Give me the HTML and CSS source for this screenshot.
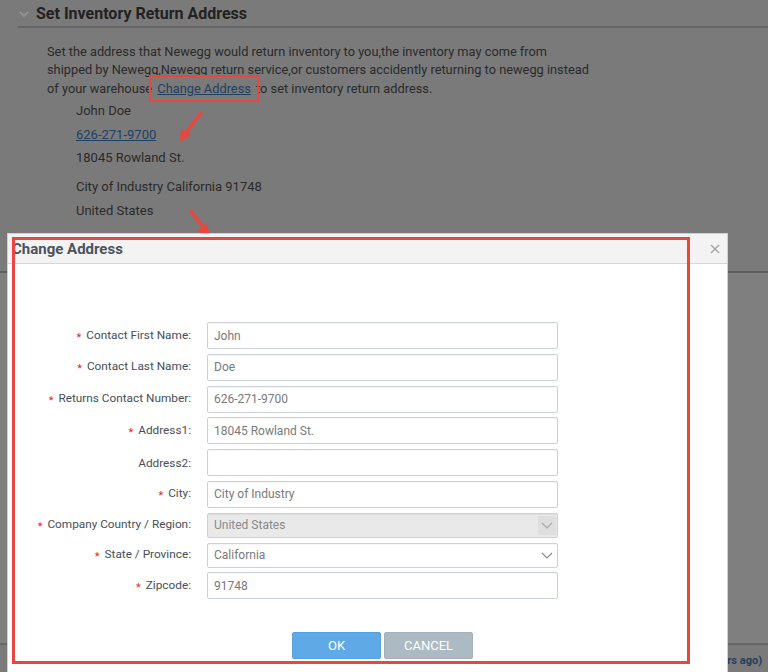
FILE: index.html
```html
<!DOCTYPE html>
<html lang="en">
<head>
    <meta charset="UTF-8">
    <title>Set Inventory Return Address</title>
    <link rel="stylesheet" href="styles.css">
</head>
<body>
    <div class="page">
        <div class="section-title">
            <svg class="chev" width="10" height="6" viewBox="0 0 10 6"><path d="M1 1 L5 5 L9 1" fill="none" stroke="#9a9a9a" stroke-width="1.5"/></svg>
            Set Inventory Return Address
        </div>
        <p class="intro">
            Set the address that Newegg would return inventory to you,the inventory may come from<br>
            shipped by Newegg,Newegg return service,or customers accidently returning to newegg instead<br>
            of your warehouse <a href="#" class="link boxed">Change Address</a> to set inventory return address.
        </p>
        <div class="addr">
            <div>John Doe</div>
            <div><a href="#" class="link">626-271-9700</a></div>
            <div>18045 Rowland St.</div>
            <div class="addr-gap">City of Industry California 91748</div>
            <div>United States</div>
        </div>
        <div class="panel"></div>
        <div class="footer"><a href="#" class="link plain">(Updated 3 hours ago)</a></div>
    </div>

    <svg class="arrows" width="768" height="672" viewBox="0 0 768 672">
        <line x1="201" y1="113" x2="186" y2="133" stroke="#e8473f" stroke-width="3.5" stroke-linecap="round"/>
        <polygon points="180,142 181,128 191,135" fill="#e8473f"/>
        <line x1="191" y1="211" x2="204" y2="228" stroke="#e8473f" stroke-width="3.5" stroke-linecap="round"/>
        <polygon points="210,237 197,231 207,223" fill="#e8473f"/>
    </svg>

    <div class="modal">
        <div class="modal-head">
            <span class="modal-title">Change Address</span>
            <svg class="close" width="10" height="10" viewBox="0 0 10 10"><path d="M1 1 L9 9 M9 1 L1 9" stroke="#a3a3a3" stroke-width="1.4"/></svg>
        </div>
        <form class="modal-body">
            <div class="grid">
                <label><span class="req">*</span>Contact First Name:</label>
                <input type="text" value="John">
                <label><span class="req">*</span>Contact Last Name:</label>
                <input type="text" value="Doe">
                <label><span class="req">*</span>Returns Contact Number:</label>
                <input type="text" value="626-271-9700">
                <label><span class="req">*</span>Address1:</label>
                <input type="text" value="18045 Rowland St.">
                <label>Address2:</label>
                <input type="text" value="">
                <label><span class="req">*</span>City:</label>
                <input type="text" value="City of Industry">
                <label><span class="req">*</span>Company Country / Region:</label>
                <div class="select disabled">
                    <select disabled><option>United States</option></select>
                    <span class="caret"><svg width="12" height="7" viewBox="0 0 12 7"><path d="M1 1 L6 6 L11 1" fill="none" stroke="#a8a8a8" stroke-width="1.2"/></svg></span>
                </div>
                <label><span class="req">*</span>State / Province:</label>
                <div class="select">
                    <select><option>California</option></select>
                    <span class="caret"><svg width="12" height="7" viewBox="0 0 12 7"><path d="M1 1 L6 6 L11 1" fill="none" stroke="#8a8a8a" stroke-width="1.2"/></svg></span>
                </div>
                <label><span class="req">*</span>Zipcode:</label>
                <input type="text" value="91748">
            </div>
            <div class="actions">
                <button type="button" class="btn ok">OK</button>
                <button type="button" class="btn cancel">CANCEL</button>
            </div>
        </form>
    </div>

    <div class="mark"></div>
</body>
</html>
```

FILE: styles.css
```css
html, body {
    margin: 0;
    height: 100%;
}
body {
    background: #7a7a7a;
    font-family: Roboto, "Liberation Sans", Arial, sans-serif;
    color: #2a2a2a;
    overflow: hidden;
    position: relative;
}
.page {
    display: flex;
    flex-direction: column;
}
.section-title {
    display: flex;
    align-items: center;
    gap: 7px;
    height: 26px;
    margin-left: 18px;
    padding-left: 1px;
    border-bottom: 2px solid #666;
    font-size: 16px;
    font-weight: bold;
    color: #222;
}
.chev {
    margin-top: 2px;
}
.intro {
    margin: 15px 0 0 47px;
    font-size: 12.8px;
    line-height: 18.3px;
}
.link {
    color: #1f3f63;
    text-decoration: underline;
}
.boxed {
    padding: 0 2px;
    outline: 2.5px solid #e8473f;
    outline-offset: 4px;
}
.plain {
    text-decoration: none;
    font-weight: bold;
    font-size: 11px;
    color: #24405e;
}
.addr {
    margin: 1px 0 0 76px;
    font-size: 13px;
    line-height: 23.7px;
}
.addr-gap {
    margin-top: 5px;
}
.panel {
    margin-top: 49px;
    height: 370px;
    border-top: 2px solid #5e5e5e;
    border-bottom: 2px solid #666;
    background: #7f7f7f;
}
.footer {
    text-align: right;
    padding: 4px 6px 0 0;
}
.arrows {
    position: absolute;
    left: 0;
    top: 0;
    pointer-events: none;
}
.modal {
    position: absolute;
    left: 7px;
    top: 233px;
    width: 721px;
    height: 460px;
    background: #fff;
    border: 1px solid #d0d0d0;
    box-sizing: border-box;
}
.modal-head {
    display: flex;
    align-items: center;
    justify-content: space-between;
    height: 29px;
    padding: 0 7px 0 4px;
    background: #f3f3f3;
    border-bottom: 1px solid #d6d6d6;
}
.modal-title {
    font-size: 15px;
    font-weight: bold;
    color: #4b5361;
}
.modal-body {
    padding-top: 58px;
}
.grid {
    display: grid;
    grid-template-columns: 183px 351px;
    column-gap: 16px;
    row-gap: 4.8px;
    align-items: center;
}
.grid label {
    text-align: right;
    font-size: 11.8px;
    color: #474e5b;
}
.req {
    color: #e0282c;
    font-size: 11px;
    margin-right: 5px;
    vertical-align: -2px;
}
.grid input,
.select {
    box-sizing: border-box;
    height: 27px;
    width: 351px;
    border: 1px solid #ccd0da;
    border-radius: 2px;
    padding: 0 6px;
    font-family: inherit;
    font-size: 12px;
    color: #7a7a7a;
    box-shadow: inset 0 1px 1px rgba(0, 0, 0, 0.04);
}
.select {
    position: relative;
    height: 25px;
    padding: 0;
    background: #fff;
}
.select select {
    appearance: none;
    -webkit-appearance: none;
    width: 100%;
    height: 100%;
    border: 0;
    background: transparent;
    padding: 0 6px;
    font-family: inherit;
    font-size: 12px;
    color: #7a7a7a;
    opacity: 1;
}
.select.disabled {
    background: #e9e9e9;
}
.select.disabled select {
    color: #8a8a8a;
}
.caret {
    position: absolute;
    right: 1px;
    top: 2px;
    width: 18px;
    height: 19px;
    display: flex;
    align-items: center;
    justify-content: center;
}
.select.disabled .caret {
    background: #dedede;
}
.actions {
    display: flex;
    gap: 3px;
    margin: 33px 0 0 284px;
}
.btn {
    width: 89px;
    height: 27px;
    border: 1px solid transparent;
    border-radius: 2px;
    font-family: inherit;
    font-size: 13px;
    color: #fff;
}
.ok {
    background: #5ea9e6;
    border-color: #56a0dd;
}
.cancel {
    background: #acbac4;
    border-color: #a4b2bc;
}
.mark {
    position: absolute;
    left: 12px;
    top: 237px;
    width: 678px;
    height: 427px;
    border: 3px solid #e8473f;
    box-sizing: border-box;
    pointer-events: none;
}
```
